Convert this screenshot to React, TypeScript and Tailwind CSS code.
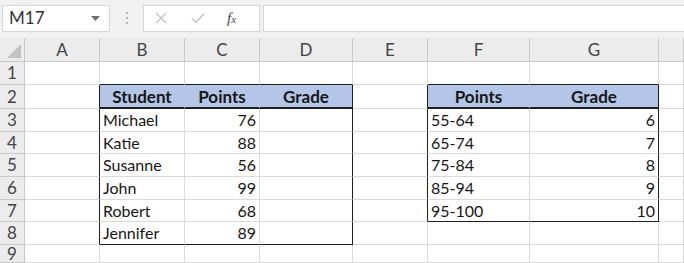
const colW = ["w-[75px]", "w-[85px]", "w-[75px]", "w-[93px]", "w-[75px]", "w-[102px]", "w-[129px]", "flex-1"];
const colNames = ["A", "B", "C", "D", "E", "F", "G", ""];
const rowH = ["h-[23px]", "h-[24px]", "h-[23px]", "h-[22px]", "h-[23px]", "h-[23px]", "h-[22px]", "h-[23px]", "h-[18px]"];

type Cell = { text: string; align?: "left" | "right" | "center"; bold?: boolean };

// sheet content keyed by row number, column index (0 = A)
const data: Record<number, Record<number, Cell>> = {
  2: {
    1: { text: "Student", align: "center", bold: true },
    2: { text: "Points", align: "center", bold: true },
    3: { text: "Grade", align: "center", bold: true },
    5: { text: "Points", align: "center", bold: true },
    6: { text: "Grade", align: "center", bold: true },
  },
  3: { 1: { text: "Michael" }, 2: { text: "76", align: "right" }, 5: { text: "55-64" }, 6: { text: "6", align: "right" } },
  4: { 1: { text: "Katie" }, 2: { text: "88", align: "right" }, 5: { text: "65-74" }, 6: { text: "7", align: "right" } },
  5: { 1: { text: "Susanne" }, 2: { text: "56", align: "right" }, 5: { text: "75-84" }, 6: { text: "8", align: "right" } },
  6: { 1: { text: "John" }, 2: { text: "99", align: "right" }, 5: { text: "85-94" }, 6: { text: "9", align: "right" } },
  7: { 1: { text: "Robert" }, 2: { text: "68", align: "right" }, 5: { text: "95-100" }, 6: { text: "10", align: "right" } },
  8: { 1: { text: "Jennifer" }, 2: { text: "89", align: "right" } },
};

const inT1 = (r: number, c: number) => r >= 2 && r <= 8 && c >= 1 && c <= 3;
const inT2 = (r: number, c: number) => r >= 2 && r <= 7 && c >= 5 && c <= 6;
const inTable = (r: number, c: number) => inT1(r, c) || inT2(r, c);

function rightBorder(r: number, c: number) {
  const edge = inTable(r, c) !== inTable(r, c + 1);
  if (edge) return "border-r border-r-[#1e1e1e]";
  if (r === 2 && inTable(r, c)) return "border-r border-r-[#b4c6e7]";
  return "border-r border-r-[#dadada]";
}

function bottomBorder(r: number, c: number) {
  if (r === 2 && inTable(r, c)) return "border-b-2 border-b-[#1e1e1e]";
  if (inTable(r, c) !== inTable(r + 1, c)) return "border-b border-b-[#1e1e1e]";
  return "border-b border-b-[#dadada]";
}

function FormulaBar() {
  return (
    <div className="flex h-[38px] items-center bg-[#f1f1f1] pb-[5px] pt-[3px]">
      <div className="ml-[2px] flex h-[27px] w-[108px] items-center justify-between border border-[#d6d6d6] bg-white pl-[6px] pr-[9px] text-[17px] text-[#333]">
        <span>M17</span>
        <svg width="9" height="5" viewBox="0 0 9 5">
          <path d="M0 0 L9 0 L4.5 5 Z" fill="#6f6f6f" />
        </svg>
      </div>
      <div className="flex w-[33px] flex-col items-center gap-[3px]">
        <span className="h-[2px] w-[2px] bg-[#b5b5b5]" />
        <span className="h-[2px] w-[2px] bg-[#b5b5b5]" />
        <span className="h-[2px] w-[2px] bg-[#b5b5b5]" />
      </div>
      <div className="flex h-[27px] w-[117px] items-center border border-[#d6d6d6] bg-white">
        <svg width="12" height="12" viewBox="0 0 12 12" className="ml-[11px]">
          <path d="M1 1 L11 11 M11 1 L1 11" stroke="#c4c4c4" strokeWidth="1.4" />
        </svg>
        <svg width="14" height="12" viewBox="0 0 14 12" className="ml-[24px]">
          <path d="M1 6.5 L5 10.5 L13 1.5" stroke="#c4c4c4" strokeWidth="1.5" fill="none" />
        </svg>
        <span className="ml-[22px] font-['Liberation_Serif'] text-[15px] italic text-[#444]">
          f<span className="text-[11px]">x</span>
        </span>
      </div>
      <div className="ml-[3px] h-[27px] flex-1 border border-r-0 border-[#d6d6d6] bg-white" />
    </div>
  );
}

export default function App() {
  return (
    <div className="h-[263px] w-[684px] overflow-hidden bg-white font-['Lato',sans-serif] text-[16px] text-[#161616]">
      <FormulaBar />
      <div className="flex h-[24px] bg-[#ececec] text-[17px] text-[#444]">
        <div className="flex w-[25px] items-end justify-end border-b border-r border-[#c9c9c9] pb-[3px] pr-[3px]">
          <svg width="14" height="14" viewBox="0 0 14 14">
            <path d="M14 0 L14 14 L0 14 Z" fill="#c2c2c2" />
          </svg>
        </div>
        {colNames.map((n, c) => (
          <div
            key={c}
            className={`${colW[c]} flex items-center justify-center border-b border-r border-[#c9c9c9]`}
          >
            {n}
          </div>
        ))}
      </div>
      {rowH.map((h, i) => {
        const r = i + 1;
        return (
          <div key={r} className={`flex ${h}`}>
            <div className="flex w-[25px] shrink-0 items-center justify-center border-b border-r border-[#c9c9c9] bg-[#ececec] text-[17px] text-[#444]">
              {r}
            </div>
            {colW.map((w, c) => {
              const cell = data[r]?.[c];
              const fill = r === 2 && inTable(r, c) ? "bg-[#b4c6e7]" : "";
              const align =
                cell?.align === "right" ? "justify-end" : cell?.align === "center" ? "justify-center" : "justify-start";
              return (
                <div
                  key={c}
                  className={`${w} flex shrink-0 items-center px-[3px] leading-none ${fill} ${align} ${rightBorder(r, c)} ${bottomBorder(r, c)} ${cell?.bold ? "text-[17px] font-bold" : ""}`}
                >
                  {cell?.text}
                </div>
              );
            })}
          </div>
        );
      })}
    </div>
  );
}
